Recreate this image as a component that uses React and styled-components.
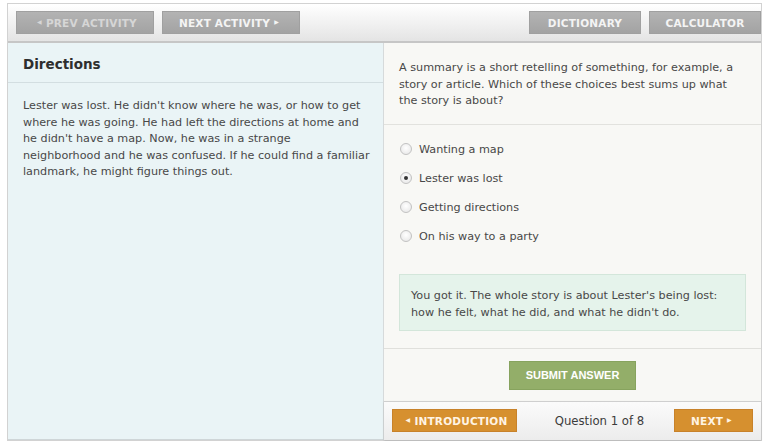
import styled, { createGlobalStyle } from 'styled-components';

const GlobalStyle = createGlobalStyle`
  html, body {
    margin: 0;
    padding: 0;
    background: #ffffff;
  }
  body {
    font-family: "DejaVu Sans", Verdana, sans-serif;
    color: #444;
  }
`;

const options = [
  { id: 'a', label: 'Wanting a map' },
  { id: 'b', label: 'Lester was lost', checked: true },
  { id: 'c', label: 'Getting directions' },
  { id: 'd', label: 'On his way to a party' },
];

const passage = [
  "Lester was lost. He didn't know where he was, or how to get",
  'where he was going. He had left the directions at home and',
  "he didn't have a map. Now, he was in a strange",
  'neighborhood and he was confused. If he could find a familiar',
  'landmark, he might figure things out.',
];

function App() {
  return (
    <>
      <GlobalStyle />
      <Frame>
        <Toolbar>
          <ToolGroup>
            <GrayButton $disabled>
              <Arrow>◀</Arrow> PREV ACTIVITY
            </GrayButton>
            <GrayButton>
              NEXT ACTIVITY <Arrow>▶</Arrow>
            </GrayButton>
          </ToolGroup>
          <ToolGroup>
            <GrayButton $w={112}>DICTIONARY</GrayButton>
            <GrayButton $w={112}>CALCULATOR</GrayButton>
          </ToolGroup>
        </Toolbar>

        <Main>
          <Passage>
            <PassageHead>Directions</PassageHead>
            <PassageText>
              {passage.map((line, i) => (
                <Line key={i}>{line}</Line>
              ))}
            </PassageText>
          </Passage>

          <Question>
            <Prompt>
              A summary is a short retelling of something, for example, a
              story or article. Which of these choices best sums up what
              the story is about?
            </Prompt>

            <Choices>
              {options.map((o) => (
                <Choice key={o.id}>
                  <Radio $checked={o.checked} />
                  {o.label}
                </Choice>
              ))}
            </Choices>

            <Feedback>
              You got it. The whole story is about Lester's being lost:
              how he felt, what he did, and what he didn't do.
            </Feedback>

            <SubmitRow>
              <SubmitButton>SUBMIT ANSWER</SubmitButton>
            </SubmitRow>

            <Footer>
              <OrangeButton $w={125}>
                <Arrow>◀</Arrow> INTRODUCTION
              </OrangeButton>
              <Counter>Question 1 of 8</Counter>
              <OrangeButton $w={79}>
                NEXT <Arrow>▶</Arrow>
              </OrangeButton>
            </Footer>
          </Question>
        </Main>
      </Frame>
    </>
  );
}

export default App;

const Frame = styled.div`
  margin: 3px 0 0 7px;
  width: 753px;
  height: 436px;
  border: 1px solid #d2d2d2;
  display: flex;
  flex-direction: column;
  background: #f8f8f5;
`;

const Toolbar = styled.div`
  height: 39px;
  flex: none;
  display: flex;
  justify-content: space-between;
  align-items: flex-start;
  padding: 7px 0 0 8px;
  box-sizing: border-box;
  background: linear-gradient(#ffffff, #e4e4e4);
  border-bottom: 2px solid #c6c6c6;
`;

const ToolGroup = styled.div`
  display: flex;
  gap: 8px;
`;

const BaseButton = styled.div`
  height: 23px;
  box-sizing: border-box;
  display: flex;
  align-items: center;
  justify-content: center;
  font-family: "DejaVu Sans", Verdana, sans-serif;
  font-weight: bold;
  font-size: 10.5px;
  letter-spacing: 0.2px;
  white-space: nowrap;
`;

const GrayButton = styled(BaseButton)`
  width: ${(p) => p.$w || 138}px;
  background: linear-gradient(#b3b3b3, #a3a3a3);
  border: 1px solid #a0a0a0;
  color: ${(p) => (p.$disabled ? '#d6d6d6' : '#f4f4f4')};
`;

const OrangeButton = styled(BaseButton)`
  width: ${(p) => p.$w}px;
  background: #d6902f;
  border: 1px solid #c8822a;
  color: #fff4e4;
`;

const Arrow = styled.span`
  font-size: 6px;
  margin: 0 4px;
  position: relative;
  top: -1px;
`;

const Main = styled.div`
  flex: 1;
  display: grid;
  grid-template-columns: 376px 1fr;
  min-height: 0;
`;

const Passage = styled.div`
  background: #eaf4f6;
  border-right: 1px solid #d6dadb;
  border-bottom: 1px solid #cfd6d8;
`;

const PassageHead = styled.div`
  height: 40px;
  box-sizing: border-box;
  padding: 3px 15px 0;
  display: flex;
  align-items: center;
  font-size: 13.5px;
  font-weight: bold;
  color: #2e2e2e;
  border-bottom: 1px solid #d3dee1;
`;

const PassageText = styled.div`
  padding: 15px 4px 14px 15px;
  font-size: 11.2px;
  line-height: 16.5px;
  color: #484848;
`;

const Line = styled.div`
  white-space: nowrap;
`;

const Question = styled.div`
  display: flex;
  flex-direction: column;
  background: #f8f8f5;
`;

const Prompt = styled.p`
  margin: 0;
  padding: 17px 16px 14px 15px;
  font-size: 11.2px;
  line-height: 16.5px;
  color: #484848;
  border-bottom: 1px solid #e2e2de;
`;

const Choices = styled.div`
  padding: 10px 0 0 16px;
  display: flex;
  flex-direction: column;
`;

const Choice = styled.label`
  height: 29px;
  display: flex;
  align-items: center;
  gap: 7px;
  font-size: 11.2px;
  color: #484848;
`;

const Radio = styled.span`
  width: 12px;
  height: 12px;
  border-radius: 50%;
  box-sizing: border-box;
  border: 1px solid #c2c2c2;
  background: radial-gradient(circle at 50% 40%, #ffffff, #e4e4e4);
  display: flex;
  align-items: center;
  justify-content: center;

  &::after {
    content: '';
    width: 4px;
    height: 4px;
    border-radius: 50%;
    background: ${(p) => (p.$checked ? '#333' : 'transparent')};
  }
`;

const Feedback = styled.div`
  margin: 23px 15px 0 15px;
  padding: 12px 11px 12px 11px;
  height: 57px;
  box-sizing: border-box;
  background: #e5f3eb;
  border: 1px solid #d3e6da;
  font-size: 11.2px;
  line-height: 17px;
  color: #484848;
`;

const SubmitRow = styled.div`
  margin-top: 17px;
  border-top: 1px solid #e0e0dc;
  height: 52px;
  display: flex;
  align-items: center;
  justify-content: center;
`;

const SubmitButton = styled.div`
  width: 127px;
  height: 29px;
  box-sizing: border-box;
  display: flex;
  align-items: center;
  justify-content: center;
  background: #93ae69;
  border: 1px solid #87a35e;
  color: #ffffff;
  font-family: "Liberation Sans", Arial, sans-serif;
  font-weight: bold;
  font-size: 11px;
  margin-top: 1px;
`;

const Footer = styled.div`
  flex: 1;
  display: flex;
  align-items: center;
  justify-content: space-between;
  padding: 0 8px;
  border-top: 1px solid #cfcfcf;
  background: linear-gradient(#fbfbfb, #ececec);
  box-shadow: 0 1px 2px rgba(0, 0, 0, 0.15);
`;

const Counter = styled.div`
  font-size: 11.7px;
  color: #3c3c3c;
  margin-left: 8px;
`;
